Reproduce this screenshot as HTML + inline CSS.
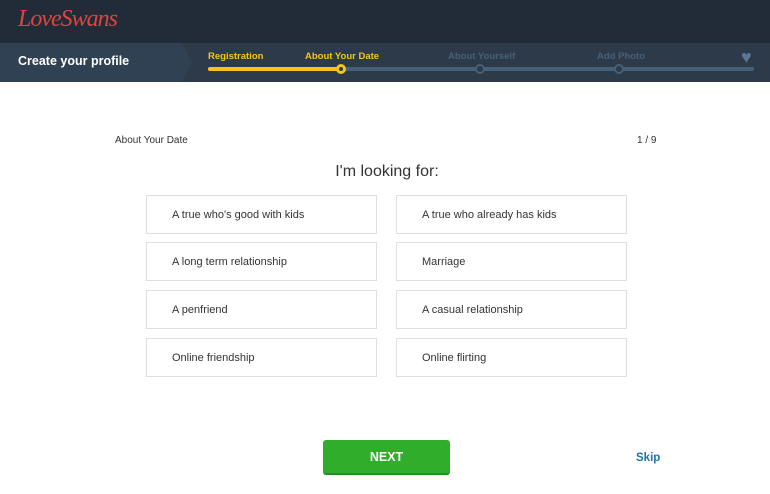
<!DOCTYPE html>
<html><head><style>
*{margin:0;padding:0;box-sizing:border-box}
body{width:770px;height:494px;background:#fff;font-family:"Liberation Sans",sans-serif;position:relative;overflow:hidden}
.top{position:absolute;left:0;top:0;width:770px;height:43px;background:#222c39}
.logo{position:absolute;left:18px;top:6px;font-family:"Liberation Serif",serif;font-style:italic;font-size:24px;color:#e0443e;letter-spacing:-1px}
.bar{position:absolute;left:0;top:43px;width:770px;height:39px;background:#2c3a4a}
.panel{position:absolute;left:0;top:43px;width:192px;height:39px;background:#304153;clip-path:polygon(0 0,182px 0,192px 19.5px,182px 39px,0 39px)}
.panel span{position:absolute;left:18px;top:11px;color:#fff;font-weight:bold;font-size:12.5px}
.lbl{position:absolute;top:51px;font-size:9.5px;font-weight:bold}
.track{position:absolute;top:67px;height:4px;border-radius:2px}
.dot{position:absolute;top:64px;width:10px;height:10px;border-radius:50%}
.card{position:absolute;width:231px;height:39px;border:1px solid #dde0e3;font-size:11px;color:#333;padding:13px 0 0 25px}
</style></head><body>
<div class="top"><div class="logo">LoveSwans</div></div>
<div class="bar"></div>
<div class="panel"><span>Create your profile</span></div>
<div class="track" style="left:208px;width:546px;background:#47607a"></div>
<div class="track" style="left:208px;width:134px;background:#f5c518"></div>
<div class="dot" style="left:336px;background:#f5c518;border:3px solid #f5c518"><div style="width:4px;height:4px;background:#2c3a4a;border-radius:50%"></div></div>
<div class="dot" style="left:475px;border:2px solid #47607a;background:#2c3a4a"></div>
<div class="dot" style="left:614px;border:2px solid #47607a;background:#2c3a4a"></div>
<div class="lbl" style="left:208px;color:#f5c518">Registration</div>
<div class="lbl" style="left:305px;color:#f5c518">About Your Date</div>
<div class="lbl" style="left:448px;color:#47607a">About Yourself</div>
<div class="lbl" style="left:597px;color:#47607a">Add Photo</div>
<div style="position:absolute;left:741px;top:47px;color:#5a7796;font-size:18px">♥</div>
<div style="position:absolute;left:115px;top:135px;font-size:10px;color:#333">About Your Date</div>
<div style="position:absolute;left:637px;top:135px;font-size:10px;color:#333">1 / 9</div>
<div style="position:absolute;left:0;width:774px;top:163px;text-align:center;font-size:16px;color:#333">I'm looking for:</div>
<div class="card" style="left:146px;top:195px">A true who's good with kids</div>
<div class="card" style="left:396px;top:195px">A true who already has kids</div>
<div class="card" style="left:146px;top:242px">A long term relationship</div>
<div class="card" style="left:396px;top:242px">Marriage</div>
<div class="card" style="left:146px;top:290px">A penfriend</div>
<div class="card" style="left:396px;top:290px">A casual relationship</div>
<div class="card" style="left:146px;top:338px">Online friendship</div>
<div class="card" style="left:396px;top:338px">Online flirting</div>
<div style="position:absolute;left:323px;top:440px;width:127px;height:35px;background:#31ad2c;border-bottom:2px solid #268d22;border-radius:3px;color:#fff;font-weight:bold;font-size:12.5px;text-align:center;line-height:34px">NEXT</div>
<div style="position:absolute;left:636px;top:452px;color:#1e73a8;font-weight:bold;font-size:11.5px">Skip</div>
</body></html>
